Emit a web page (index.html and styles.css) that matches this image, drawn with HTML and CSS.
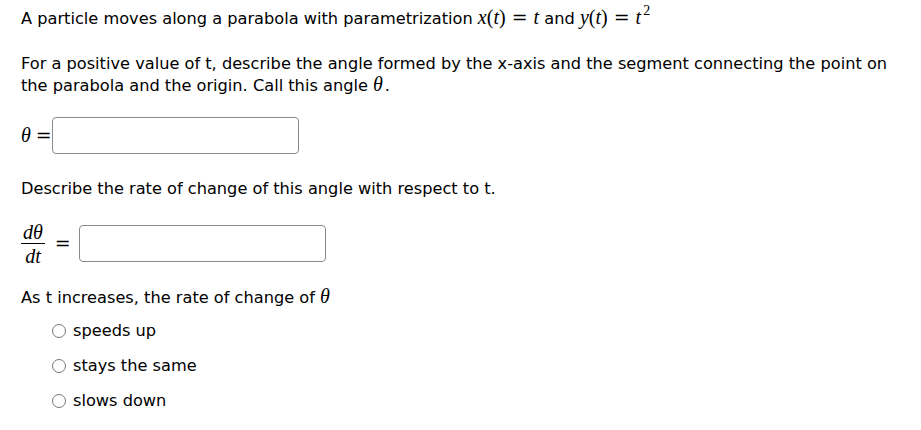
FILE: index.html
```html
<!DOCTYPE html>
<html>
<head>
<meta charset="utf-8">
<link rel="stylesheet" href="styles.css">
</head>
<body>
<div class="page">
  <p class="line intro">A particle moves along a parabola with parametrization <span class="m"><i>x</i>(<i>t</i>)<span class="op">=</span><i>t</i></span> and <span class="m"><i>y</i>(<i>t</i>)<span class="op">=</span><i>t</i><sup>2</sup></span></p>
  <p class="line para">For a positive value of t, describe the angle formed by the x-axis and the segment connecting the point on the parabola and the origin. Call this angle <span class="m theta">θ</span>.</p>
  <div class="answer a1">
    <span class="m lhs"><i>θ</i><span class="op tight">=</span></span>
    <input class="box" type="text">
  </div>
  <p class="line desc">Describe the rate of change of this angle with respect to t.</p>
  <div class="answer a2">
    <span class="m frac"><span class="num"><i>d</i><i>θ</i></span><span class="den"><i>d</i><i>t</i></span></span>
    <span class="m op eq2">=</span>
    <input class="box" type="text">
  </div>
  <p class="line as">As t increases, the rate of change of <span class="m"><i>θ</i></span></p>
  <ul class="choices">
    <li><span class="radio"></span>speeds up</li>
    <li><span class="radio"></span>stays the same</li>
    <li><span class="radio"></span>slows down</li>
  </ul>
</div>
</body>
</html>
```
FILE: styles.css
```css
html, body { margin: 0; padding: 0; background: #fff; }
.page {
  padding: 7px 0 0 21px;
  font-family: "DejaVu Sans", sans-serif;
  font-size: 16.2px;
  color: #000;
  line-height: 21px;
  width: 878px;
}
.line { margin: 0; }
.m { font-family: "Liberation Serif", serif; font-size: 20px; }
.m i { font-style: italic; }
.theta { font-style: italic; margin-right: 2px; }
.op { font-family: "DejaVu Serif", serif; font-size: 19px; margin: 0 6px; font-style: normal; }
.op.tight { margin: 0 0 0 5px; }
sup { font-size: 14px; line-height: 0; vertical-align: 9px; margin-left: 2px; }
.para { margin-top: 24px; }
.answer { display: flex; align-items: center; }
.a1 { margin-top: 21px; }
.box {
  width: 247px; height: 37px; box-sizing: border-box;
  border: 1px solid #8a8a8a; border-radius: 4px; margin: 0;
  padding: 0 4px; font-size: 16px; background: #fff;
}
.lhs { display: flex; align-items: center; }
.desc { margin-top: 24px; }
.a2 { margin-top: 26px; height: 37px; }
.frac { display: inline-flex; flex-direction: column; align-items: center; line-height: 20px; }
.num { border-bottom: 1px solid #000; padding: 0 2px 1px; }
.den { padding-top: 2px; }
.op.eq2 { margin: 0 8px 0 10px; }
.as { margin-top: 24px; }
.choices { list-style: none; margin: 5px 0 0 31px; padding: 0; }
.choices li { display: flex; align-items: center; height: 35px; }
.radio {
  width: 12px; height: 12px; border: 1px solid #767676; border-radius: 50%;
  margin-right: 7px; box-sizing: content-box; background: #fff;
}
```
